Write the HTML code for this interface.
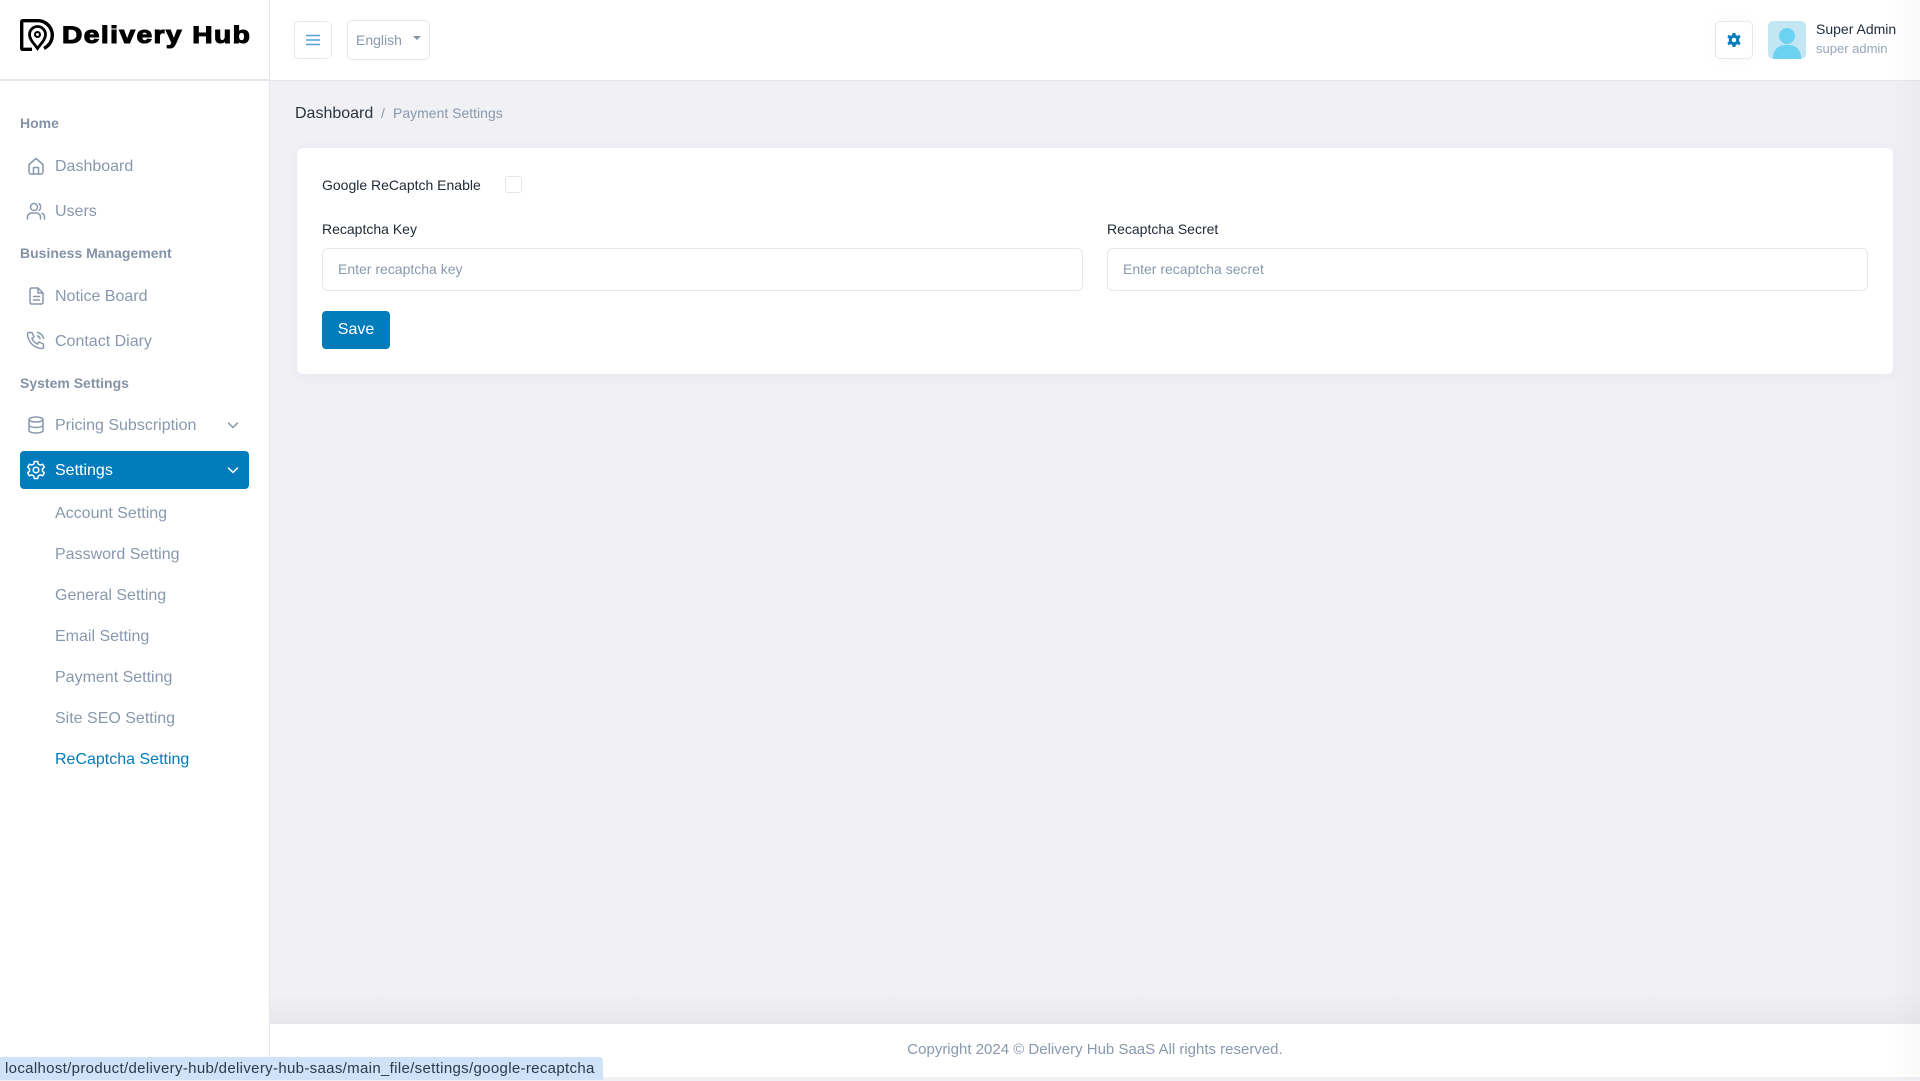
<!DOCTYPE html>
<html lang="en"><head><meta charset="utf-8"><title>ReCaptcha Setting</title>
<style>
html,body{margin:0;padding:0;width:1920px;height:1080px;overflow:hidden;background:#f0f0f5;font-family:"Liberation Sans",sans-serif}
div,span,svg{position:absolute;box-sizing:border-box}
.t{white-space:nowrap;line-height:24px;height:24px}
.n{left:55px;font-size:16px;color:#8898ad}
.s{left:20px;font-size:14px;font-weight:700;color:#8492a6}
.l{font-size:14px;color:#212b36}
.i{left:26px;width:20px;height:20px;fill:none;stroke:#8898ad;stroke-width:1.5;stroke-linecap:round;stroke-linejoin:round}
.inp{top:248px;height:43px;width:761px;background:#fff;border:1px solid #e5e7eb;border-radius:6px}
.ph{font-size:14px;color:#8898ad;top:257px}
.chev{left:226px;width:14px;height:14px;fill:none;stroke:#8898ad;stroke-width:1.5;stroke-linecap:round;stroke-linejoin:round}
</style></head><body>
<!-- main shade -->
<div style="left:270px;top:960px;width:1650px;height:64px;background:linear-gradient(#f0f0f5 50%,#e8e8ed)"></div>
<!-- sidebar -->
<div style="left:0;top:0;width:270px;height:1080px;background:#fff;border-right:1px solid #e5e7eb"></div>
<div style="left:0;top:79px;width:270px;height:2px;background:#e5e7eb"></div>
<!-- topbar -->
<div style="left:270px;top:0;width:1650px;height:81px;background:#fff;border-bottom:1px solid #e5e7eb"></div>
<!-- logo -->
<svg style="left:20px;top:19px" width="35" height="33" viewBox="0 0 35 33" fill="none">
<path d="M12 30.300H3Q1.700 30.300 1.700 29V3Q1.700 1.700 3 1.700H17.500A14.500 14.500 0 0 1 24 29.300" stroke="#000" stroke-width="3.400"/>
<path d="M17.500 29.500C14 24.500 9.500 20.500 9.500 15.500A8 8 0 0 1 25.500 15.500C25.500 20.500 21 24.500 17.500 29.500Z" stroke="#000" stroke-width="2.800"/>
<circle cx="17.500" cy="15.500" r="2.500" stroke="#000" stroke-width="2"/>
</svg>
<div class="t" style="left:62px;top:24px;font-size:24px;font-weight:700;color:#000;-webkit-text-stroke:1.1px #000;letter-spacing:1.2px;line-height:24px;transform:scaleX(1.175);transform-origin:0 50%">Delivery Hub</div>
<!-- nav -->
<div class="t s" style="top:111px">Home</div>
<svg class="i" style="top:156px" viewBox="0 0 20 20"><path d="M3 8.500L10 2.500L17 8.500V16C17 17 16 18 15 18H5C4 18 3 17 3 16Z"/><path d="M7.500 18V11.500H12.500V18"/></svg>
<div class="t n" style="top:155px">Dashboard</div>
<svg class="i" style="top:201px" viewBox="0 0 20 20"><circle cx="8" cy="6" r="3.500"/><path d="M1.500 18V16C1.500 13.500 3.500 12 6 12H10C12.500 12 14.500 13.500 14.500 16V18"/><path d="M13 2.700C15 3.200 15 8.800 13 9.300"/><path d="M18.500 18V16C18.500 14 17.500 12.700 16 12.300"/></svg>
<div class="t n" style="top:200px">Users</div>
<div class="t s" style="top:241px">Business Management</div>
<svg class="i" style="top:286px" viewBox="0 0 20 20"><path d="M4 4C4 2.800 4.800 2 6 2H12L17 7V16C17 17.200 16.200 18 15 18H6C4.800 18 4 17.200 4 16Z"/><path d="M12 2V7H17M7.500 10.500H13.500M7.500 14H13.500"/></svg>
<div class="t n" style="top:285px">Notice Board</div>
<svg class="i" style="top:330px" viewBox="0 0 20 20"><path d="M3 2.500H6L8 7L6 8.500C7 11 9 13 11.500 14L13 12L17.500 14V17C17.500 18 16.500 18.500 15.500 18.500C8 18 2 12 1.500 4.500C1.500 3.500 2 2.500 3 2.500Z"/><path d="M11.500 6C12.800 6.300 13.700 7.200 14 8.500M11.500 2.500C14.500 3 17 5.500 17.500 8.500"/></svg>
<div class="t n" style="top:330px">Contact Diary</div>
<div class="t s" style="top:371px">System Settings</div>
<svg class="i" style="top:415px" viewBox="0 0 20 20"><ellipse cx="10" cy="4.500" rx="7" ry="2.500"/><path d="M3 4.500V15.500C3 17 6 18 10 18C14 18 17 17 17 15.500V4.500M3 10C3 11.500 6 12.500 10 12.500C14 12.500 17 11.500 17 10"/></svg>
<div class="t n" style="top:414px">Pricing Subscription</div>
<svg class="chev" style="top:418px" viewBox="0 0 14 14"><path d="M2.500 5L7 9.500L11.500 5"/></svg>
<div style="left:20px;top:451px;width:229px;height:38px;background:#027cba;border-radius:4px"></div>
<svg class="i" style="top:460px;stroke:#fff" viewBox="0 0 20 20"><circle cx="10" cy="10" r="2.800"/><path d="M8.300 1.500H11.700L12.200 4L14.200 5.100L16.600 4.300L18.300 7.200L16.400 8.900V11.100L18.300 12.800L16.600 15.700L14.200 14.900L12.200 16L11.700 18.500H8.300L7.800 16L5.800 14.900L3.400 15.700L1.700 12.800L3.600 11.100V8.900L1.700 7.200L3.400 4.300L5.800 5.100L7.800 4Z"/></svg>
<div class="t n" style="top:459px;color:#fff">Settings</div>
<svg class="chev" style="top:463px;stroke:#fff" viewBox="0 0 14 14"><path d="M2.500 5L7 9.500L11.500 5"/></svg>
<div class="t n" style="top:502px">Account Setting</div>
<div class="t n" style="top:543px">Password Setting</div>
<div class="t n" style="top:584px">General Setting</div>
<div class="t n" style="top:625px">Email Setting</div>
<div class="t n" style="top:666px">Payment Setting</div>
<div class="t n" style="top:707px">Site SEO Setting</div>
<div class="t n" style="top:748px;color:#027cba">ReCaptcha Setting</div>
<!-- topbar controls -->
<div style="left:294px;top:21px;width:38px;height:38px;border:1px solid #e5e7eb;border-radius:5px;background:#fff"></div>
<svg style="left:306px;top:33px" width="14" height="14" viewBox="0 0 14 14"><path d="M0 2.500H14M0 7H14M0 11.500H14" stroke="#4da6d3" stroke-width="1.500"/></svg>
<div style="left:347px;top:20px;width:83px;height:40px;border:1px solid #e5e7eb;border-radius:5px;background:#fff"></div>
<div class="t" style="left:356px;top:28px;font-size:14px;color:#8898ad">English</div>
<div style="left:413px;top:36px;width:0;height:0;border-left:4px solid transparent;border-right:4px solid transparent;border-top:4px solid #8492a6"></div>
<div style="left:1715px;top:21px;width:38px;height:38px;border:1px solid #e5e7eb;border-radius:5px;background:#fff;box-shadow:0 0 20px rgba(0,0,0,.03)"></div>
<svg style="left:1727px;top:33px" width="14" height="14" viewBox="0 0 20 20"><path fill="#027cba" fill-rule="evenodd" d="M8 0H12L12.600 3L15 4.100L17.600 2.500L19.500 5.800L17.300 7.800V12.200L19.500 14.200L17.600 17.500L15 15.900L12.600 17L12 20H8L7.400 17L5 15.900L2.400 17.500L.5 14.200L2.700 12.200V7.800L.5 5.800L2.400 2.500L5 4.100L7.400 3ZM10 6.800A3.200 3.200 0 1 0 10 13.200A3.200 3.200 0 1 0 10 6.800Z"/></svg>
<div style="left:1768px;top:21px;width:38px;height:38px;border-radius:5px;background:#c2e7f3;overflow:hidden">
<div style="left:11px;top:7px;width:16px;height:16px;border-radius:50%;background:#6bd2f2"></div>
<div style="left:5px;top:24px;width:28px;height:20px;border-radius:12px 12px 0 0;background:#6bd2f2"></div></div>
<div class="t" style="left:1816px;top:17px;font-size:14px;color:#1f2d3d">Super Admin</div>
<div class="t" style="left:1816px;top:37px;font-size:13px;color:#98a6b8">super admin</div>
<!-- breadcrumb -->
<div class="t" style="left:295px;top:102px;font-size:16px;color:#2b3440">Dashboard</div>
<div class="t" style="left:381px;top:101px;font-size:14px;color:#8898ad">/</div>
<div class="t" style="left:393px;top:101px;font-size:14px;color:#8898ad">Payment Settings</div>
<!-- card -->
<div style="left:297px;top:148px;width:1596px;height:226px;background:#fff;border-radius:6px;box-shadow:0 2px 14px rgba(60,60,90,.05)"></div>
<div class="t l" style="left:322px;top:173px">Google ReCaptch Enable</div>
<div style="left:505px;top:176px;width:17px;height:17px;border:1px solid #e5e7eb;border-radius:3px;background:#fff"></div>
<div class="t l" style="left:322px;top:217px">Recaptcha Key</div>
<div class="t l" style="left:1107px;top:217px">Recaptcha Secret</div>
<div class="inp" style="left:322px"></div>
<div class="inp" style="left:1107px"></div>
<div class="t ph" style="left:338px">Enter recaptcha key</div>
<div class="t ph" style="left:1123px">Enter recaptcha secret</div>
<div style="left:322px;top:311px;width:68px;height:38px;background:#027cba;border-radius:4px"></div>
<div class="t" style="left:322px;top:318px;width:68px;text-align:center;font-size:16px;color:#fff">Save</div>
<!-- footer -->
<div style="left:270px;top:1024px;width:1650px;height:53px;background:#fff"></div>
<div class="t" style="left:270px;top:1038px;width:1650px;text-align:center;font-size:15px;color:#8898ad">Copyright 2024 © Delivery Hub SaaS All rights reserved.</div>
<!-- right edge shade -->
<div style="left:1890px;top:0;width:30px;height:1080px;background:linear-gradient(90deg,rgba(0,0,0,0),rgba(0,0,0,.025))"></div>
<!-- status bubble -->
<div style="left:0;top:1057px;width:603px;height:23px;background:#cfe2f8;border-top-right-radius:4px"></div>
<div class="t" style="left:5px;top:1057px;line-height:23px;font-size:15px;letter-spacing:.33px;color:#2c3a4a">localhost/product/delivery-hub/delivery-hub-saas/main_file/settings/google-recaptcha</div>
</body></html>
